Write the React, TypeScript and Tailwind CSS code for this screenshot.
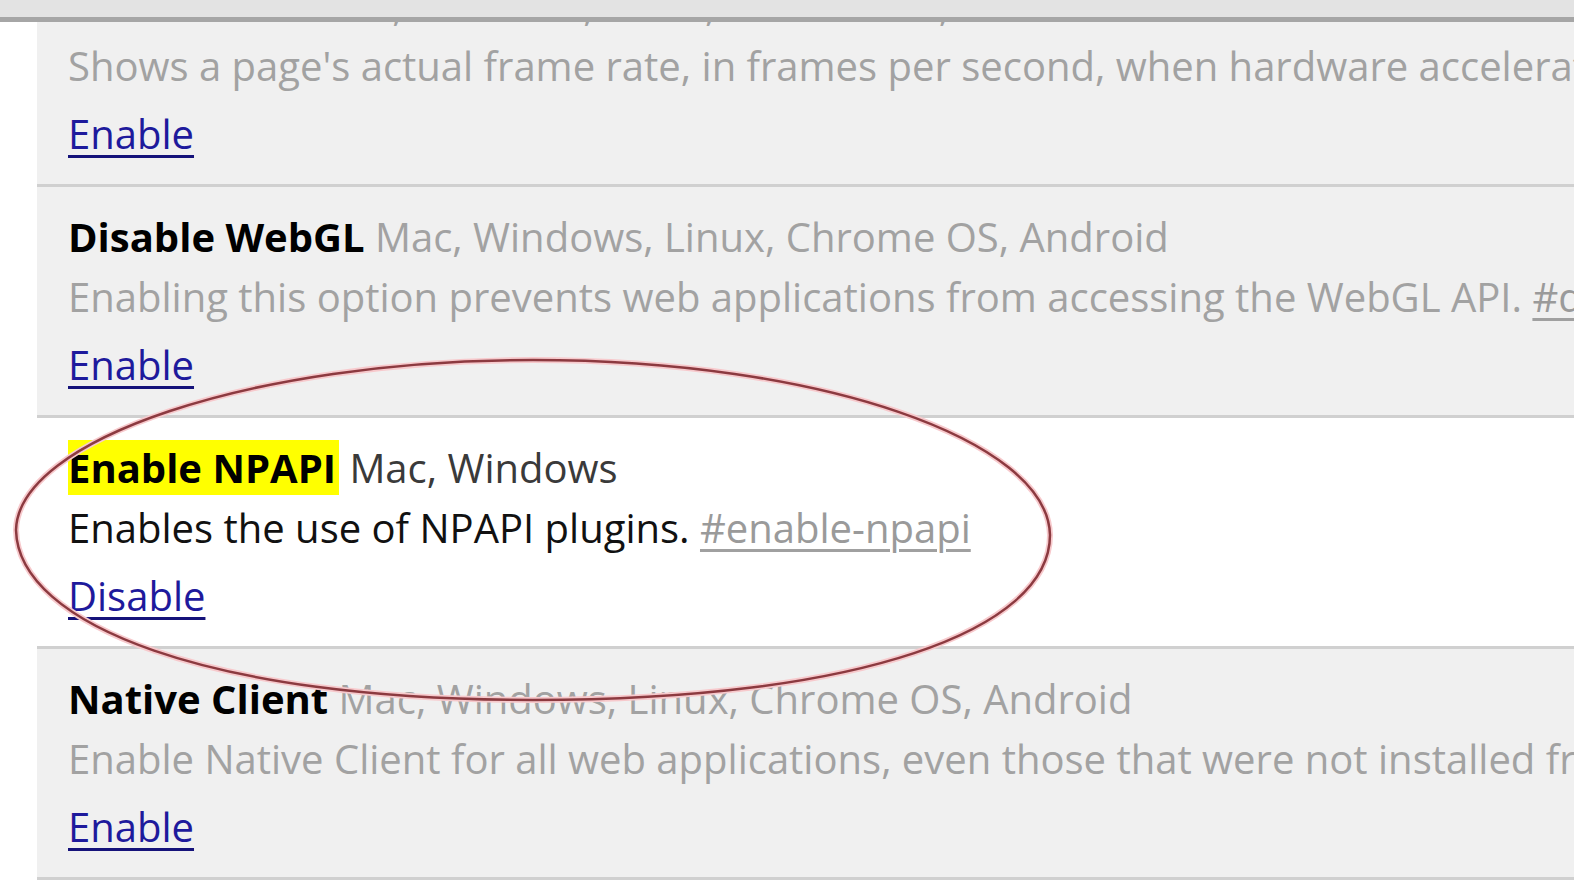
import type { ReactNode } from 'react'

type Flag = {
  name: string
  platforms: string
  desc: string
  hash: string
  action: string
  on?: boolean
}

const FLAGS: Flag[] = [
  {
    name: 'FPS counter',
    platforms: 'Mac, Windows, Linux, Chrome OS, Android',
    desc: "Shows a page's actual frame rate, in frames per second, when hardware acceleration is active.",
    hash: '#show-fps-counter',
    action: 'Enable',
  },
  {
    name: 'Disable WebGL',
    platforms: 'Mac, Windows, Linux, Chrome OS, Android',
    desc: 'Enabling this option prevents web applications from accessing the WebGL API.',
    hash: '#disable-webgl',
    action: 'Enable',
  },
  {
    name: 'Enable NPAPI',
    platforms: 'Mac, Windows',
    desc: 'Enables the use of NPAPI plugins.',
    hash: '#enable-npapi',
    action: 'Disable',
    on: true,
  },
  {
    name: 'Native Client',
    platforms: 'Mac, Windows, Linux, Chrome OS, Android',
    desc: 'Enable Native Client for all web applications, even those that were not installed from the Chrome Web Store.',
    hash: '#enable-nacl',
    action: 'Enable',
  },
]

function Line({ children, className = '' }: { children: ReactNode; className?: string }) {
  return <div className={`h-[60px] leading-[60px] whitespace-nowrap ${className}`}>{children}</div>
}

function FlagRow({ flag }: { flag: Flag }) {
  const muted = !flag.on
  return (
    <div
      className={`pl-[31px] pt-[20px] pb-[20px] border-b-[3px] border-[#d0d0d0] ${
        flag.on ? 'bg-white' : 'bg-[#f0f0f0]'
      }`}
    >
      <Line>
        <span className={`font-bold text-black ${flag.on ? 'bg-[#ffff00] pr-[3px]' : ''}`}>{flag.name}</span>{' '}
        <span className={muted ? 'text-[#a2a2a2]' : 'text-[#3a3a3a]'}>{flag.platforms}</span>
      </Line>
      <Line className={muted ? 'text-[#a2a2a2]' : 'text-[#111]'}>
        {flag.desc}{' '}
        <a className="text-[#9a9a9a] underline decoration-[3px] underline-offset-[6px] decoration-[#a0a0a0]">
          {flag.hash}
        </a>
      </Line>
      <Line className="mt-[8px]">
        <a className="text-[#1e1a9c] underline decoration-[3px] underline-offset-[6px] decoration-[#15127a]">
          {flag.action}
        </a>
      </Line>
    </div>
  )
}

export default function App() {
  return (
    <div
      className="relative w-[1574px] h-[884px] overflow-hidden bg-white text-[40px]"
      style={{ fontFamily: '"Open Sans", "Noto Sans", sans-serif' }}
    >
      <div className="pl-[37px] pt-[19px]">
        <div className="-mt-[63px]">
          {FLAGS.map(f => (
            <FlagRow key={f.hash} flag={f} />
          ))}
        </div>
      </div>

      {/* browser chrome edge, page scrolled underneath it */}
      <div className="absolute top-0 left-0 right-0 z-10 h-[22px] bg-[#e3e3e3] border-b-[5px] border-[#a6a6a6]" />

      {/* hand-drawn red circle */}
      <svg className="absolute inset-0 z-20 pointer-events-none" width="1574" height="884" viewBox="0 0 1574 884">
        <path
          d="M16 530 C 18 440, 250 360, 533 360 C 820 360, 1048 440, 1050 535 C 1050 630, 860 700, 533 700 C 210 700, 18 625, 16 530 Z"
          fill="none"
          stroke="#f7c9cc"
          strokeWidth="6"
        />
        <path
          d="M16 530 C 18 440, 250 360, 533 360 C 820 360, 1048 440, 1050 535 C 1050 630, 860 700, 533 700 C 210 700, 18 625, 16 530 Z"
          fill="none"
          stroke="#8c3a40"
          strokeWidth="2.5"
        />
      </svg>
    </div>
  )
}
